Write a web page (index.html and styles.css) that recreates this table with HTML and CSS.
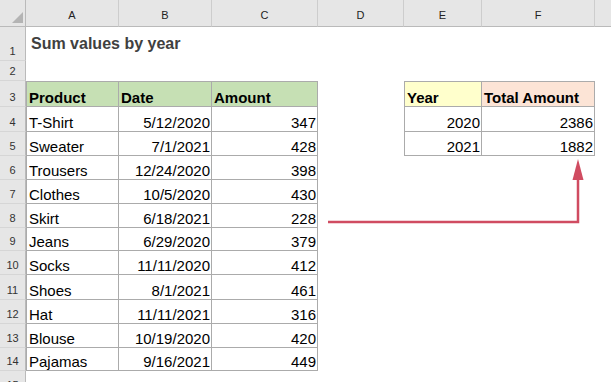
FILE: index.html
```html
<!DOCTYPE html>
<html lang="en">
<head>
  <meta charset="UTF-8">
  <meta name="viewport" content="width=device-width, initial-scale=1.0">
  <title>Sum values by year</title>
  <link rel="stylesheet" href="styles.css">
</head>
<body>
  <div class="sheet">
    <!-- column headers -->
    <div class="hd corner">
      <svg width="11" height="11" viewBox="0 0 11 11"><polygon points="11,0 11,11 0,11" fill="#b4b4b4"/></svg>
    </div>
    <div class="hd">A</div>
    <div class="hd">B</div>
    <div class="hd">C</div>
    <div class="hd">D</div>
    <div class="hd">E</div>
    <div class="hd">F</div>
    <div class="hd last"></div>

    <!-- row 1 -->
    <div class="rn">1</div>
    <div class="c title">Sum values by year</div>
    <div class="c"></div><div class="c"></div><div class="c"></div><div class="c"></div><div class="c"></div><div class="c"></div>

    <!-- row 2 -->
    <div class="rn">2</div>
    <div class="c"></div><div class="c"></div><div class="c"></div><div class="c"></div><div class="c"></div><div class="c"></div><div class="c"></div>

    <!-- row 3 -->
    <div class="rn">3</div>
    <div class="t l tp green b">Product</div>
    <div class="t tp green b">Date</div>
    <div class="t tp green b">Amount</div>
    <div class="c"></div>
    <div class="t l tp yellow b">Year</div>
    <div class="t tp peach b">Total Amount</div>
    <div class="c"></div>

    <!-- row 4 -->
    <div class="rn">4</div>
    <div class="t l">T-Shirt</div>
    <div class="t num">5/12/2020</div>
    <div class="t num">347</div>
    <div class="c"></div>
    <div class="t l num">2020</div>
    <div class="t num">2386</div>
    <div class="c"></div>

    <!-- row 5 -->
    <div class="rn">5</div>
    <div class="t l">Sweater</div>
    <div class="t num">7/1/2021</div>
    <div class="t num">428</div>
    <div class="c"></div>
    <div class="t l num">2021</div>
    <div class="t num">1882</div>
    <div class="c"></div>

    <!-- row 6 -->
    <div class="rn">6</div>
    <div class="t l">Trousers</div>
    <div class="t num">12/24/2020</div>
    <div class="t num">398</div>
    <div class="c"></div><div class="c"></div><div class="c"></div><div class="c"></div>

    <!-- row 7 -->
    <div class="rn">7</div>
    <div class="t l">Clothes</div>
    <div class="t num">10/5/2020</div>
    <div class="t num">430</div>
    <div class="c"></div><div class="c"></div><div class="c"></div><div class="c"></div>

    <!-- row 8 -->
    <div class="rn">8</div>
    <div class="t l">Skirt</div>
    <div class="t num">6/18/2021</div>
    <div class="t num">228</div>
    <div class="c"></div><div class="c"></div><div class="c"></div><div class="c"></div>

    <!-- row 9 -->
    <div class="rn">9</div>
    <div class="t l">Jeans</div>
    <div class="t num">6/29/2020</div>
    <div class="t num">379</div>
    <div class="c"></div><div class="c"></div><div class="c"></div><div class="c"></div>

    <!-- row 10 -->
    <div class="rn">10</div>
    <div class="t l">Socks</div>
    <div class="t num">11/11/2020</div>
    <div class="t num">412</div>
    <div class="c"></div><div class="c"></div><div class="c"></div><div class="c"></div>

    <!-- row 11 -->
    <div class="rn">11</div>
    <div class="t l">Shoes</div>
    <div class="t num">8/1/2021</div>
    <div class="t num">461</div>
    <div class="c"></div><div class="c"></div><div class="c"></div><div class="c"></div>

    <!-- row 12 -->
    <div class="rn">12</div>
    <div class="t l">Hat</div>
    <div class="t num">11/11/2021</div>
    <div class="t num">316</div>
    <div class="c"></div><div class="c"></div><div class="c"></div><div class="c"></div>

    <!-- row 13 -->
    <div class="rn">13</div>
    <div class="t l">Blouse</div>
    <div class="t num">10/19/2020</div>
    <div class="t num">420</div>
    <div class="c"></div><div class="c"></div><div class="c"></div><div class="c"></div>

    <!-- row 14 -->
    <div class="rn">14</div>
    <div class="t l">Pajamas</div>
    <div class="t num">9/16/2021</div>
    <div class="t num">449</div>
    <div class="c"></div><div class="c"></div><div class="c"></div><div class="c"></div>

    <!-- row 15 -->
    <div class="rn">15</div>
    <div class="c"></div><div class="c"></div><div class="c"></div><div class="c"></div><div class="c"></div><div class="c"></div><div class="c"></div>

    <!-- arrow from the data table to the result -->
    <svg class="arrow" width="611" height="382" viewBox="0 0 611 382">
      <path d="M328 222 H578 V176" fill="none" stroke="#d04c61" stroke-width="2.5"/>
      <polygon points="572.5,180 583.5,180 578,159" fill="#d04c61"/>
    </svg>
  </div>
</body>
</html>
```

FILE: styles.css
```css
body {
  margin: 0;
  overflow: hidden;
  background: #fff;
  font-family: 'Liberation Sans', Arial, sans-serif;
  color: #000;
}
.sheet {
  position: relative;
  display: grid;
  grid-template-columns: 26px 93px 93px 106px 86px 78px 113px 1fr;
  grid-template-rows: 27px 34px 20px 26px 25px 24px 24px 24px 24px 23px 24px 25px 24px 24px 23px 24px;
  width: 611px;
  height: 382px;
  overflow: hidden;
}
.sheet > div {
  box-sizing: border-box;
  min-width: 0;
  white-space: nowrap;
  overflow: hidden;
}

/* column and row headers */
.hd {
  background: #e6e6e6;
  border-right: 1px solid #cdcdcd;
  border-bottom: 1px solid #bababa;
  display: flex;
  align-items: flex-end;
  justify-content: center;
  padding-bottom: 4px;
  font-size: 11px;
  line-height: 13px;
  color: #222;
}
.hd.corner {
  justify-content: flex-end;
  padding: 0 2px 3px 0;
  border-right-color: #bababa;
}
.hd.corner svg {
  display: block;
}
.hd.last {
  border-right: none;
}
.rn {
  background: #e6e6e6;
  border-right: 1px solid #bababa;
  border-bottom: 1px solid #d6d6d6;
  display: flex;
  align-items: flex-end;
  justify-content: center;
  padding-bottom: 2px;
  font-size: 11px;
  line-height: 13px;
  color: #333;
}

/* cells */
.c, .t {
  display: flex;
  align-items: flex-end;
  padding: 0 2px;
  font-size: 15px;
  line-height: 14px;
}
.t {
  border-right: 1px solid #ababab;
  border-bottom: 1px solid #ababab;
  padding-bottom: 1px;
}
.t.l { border-left: 1px solid #ababab; }
.t.tp { border-top: 1px solid #ababab; }
.num {
  justify-content: flex-end;
  padding-right: 1px;
}
.b { font-weight: bold; }
.green { background: #c6e0b4; }
.yellow { background: #ffffcc; }
.peach { background: #fce4d6; }

.title {
  align-items: center;
  padding-left: 5px;
  font-size: 16px;
  font-weight: bold;
  line-height: 18px;
  color: #404040;
  overflow: visible !important;
}

.arrow {
  position: absolute;
  top: 0;
  left: 0;
  pointer-events: none;
}
```
